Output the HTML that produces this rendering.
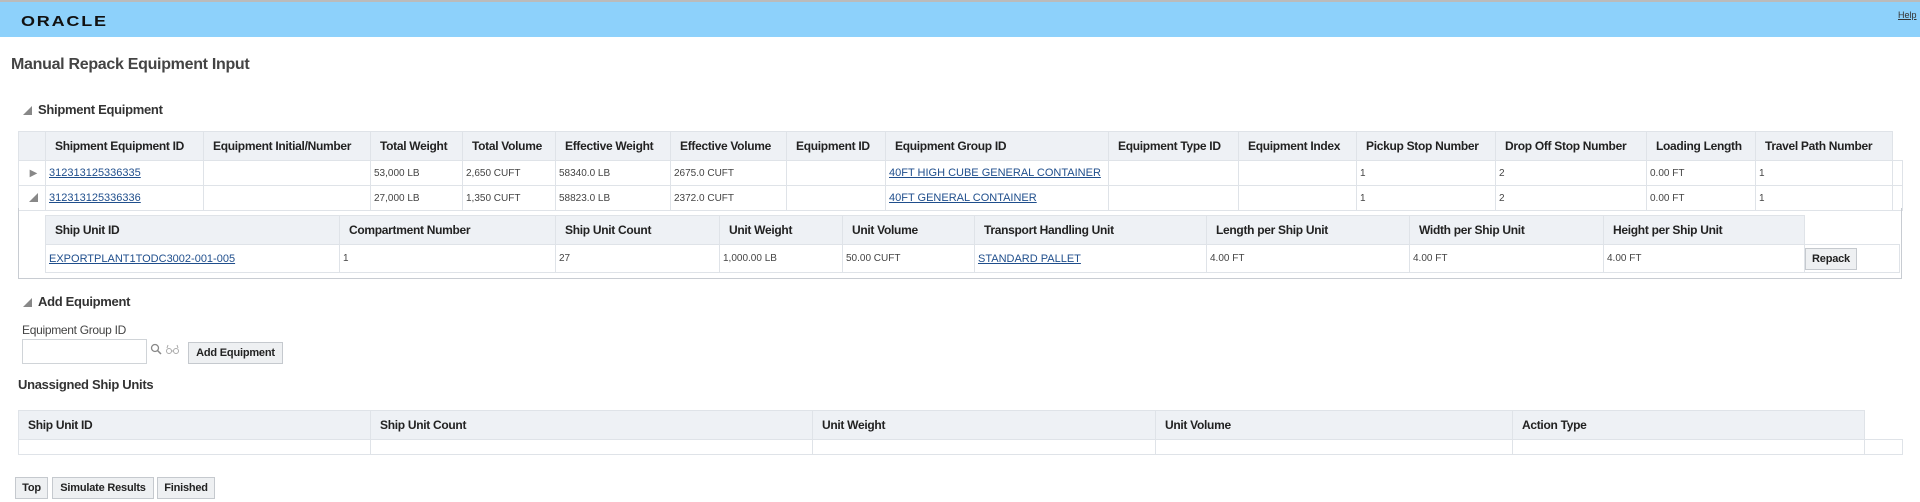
<!DOCTYPE html>
<html><head><meta charset="utf-8"><style>
*{box-sizing:border-box;margin:0;padding:0}
body{width:1920px;height:502px;overflow:hidden;background:#fff;font-family:"Liberation Sans",Arial,sans-serif;color:#333;position:relative}
.hdr{position:absolute;left:0;top:0;width:1920px;height:37px;background:#8dd1fb;border-top:2px solid #bbb}
.logo{position:absolute;left:21px;top:11px;font:bold 15px "Liberation Sans",sans-serif;letter-spacing:1.5px;color:#111;transform:scaleX(1.2);transform-origin:left}
.help{position:absolute;left:1898px;top:8px;font-size:9px;color:#333;text-decoration:underline}
.abs{position:absolute}
.title{left:11px;top:56px;font-size:16px;font-weight:bold;color:#444;letter-spacing:-0.3px}
.sec{font-size:13px;font-weight:bold;color:#333;letter-spacing:-0.3px}
.tri{display:inline-block;width:0;height:0;border-left:9px solid transparent;border-bottom:9px solid #888;margin-right:6px;vertical-align:-1px}
table{border-collapse:collapse;table-layout:fixed;position:absolute}
th{background:#eef1f5;font-size:12px;font-weight:bold;text-align:left;padding:0 0 0 9px;height:29px;border:1px solid #dfe3e8;letter-spacing:-0.3px;white-space:nowrap;overflow:hidden;color:#222}
td{font-size:10px;color:#444;padding:0 0 0 3px;border:1px solid #dfe3e8;white-space:nowrap;overflow:hidden;height:25px}
tr.thin td{height:15px;line-height:10px;font-size:8px}
a{color:#1f4e8c;text-decoration:underline;font-size:11px}
.btn{position:absolute;background:#eef0f2;border:1px solid #c5c9ce;font-size:11px;font-weight:bold;color:#222;text-align:center;line-height:20px;height:22px;letter-spacing:-0.2px}
</style></head><body>
<div class="hdr"><div class="logo">ORACLE</div><div class="help">Help</div></div>
<div class="abs title">Manual Repack Equipment Input</div>
<div class="abs sec" style="left:23px;top:102px"><span class="tri"></span>Shipment Equipment</div>

<table style="left:18px;top:131px;width:1884px">
<colgroup><col style="width:27px"><col style="width:158px"><col style="width:167px"><col style="width:92px"><col style="width:93px"><col style="width:115px"><col style="width:116px"><col style="width:99px"><col style="width:223px"><col style="width:130px"><col style="width:118px"><col style="width:139px"><col style="width:151px"><col style="width:109px"><col style="width:137px"><col style="width:10px"></colgroup>
<tr><th></th><th>Shipment Equipment ID</th><th>Equipment Initial/Number</th><th>Total Weight</th><th>Total Volume</th><th>Effective Weight</th><th>Effective Volume</th><th>Equipment ID</th><th>Equipment Group ID</th><th>Equipment Type ID</th><th>Equipment Index</th><th>Pickup Stop Number</th><th>Drop Off Stop Number</th><th>Loading Length</th><th>Travel Path Number</th><th style="background:#fff;border-top:none;border-right:none"></th></tr>
<tr><td style="text-align:center;color:#888;font-size:10px">&#9654;</td><td><a>312313125336335</a></td><td></td><td>53,000 LB</td><td>2,650 CUFT</td><td>58340.0 LB</td><td>2675.0 CUFT</td><td></td><td><a>40FT HIGH CUBE GENERAL CONTAINER</a></td><td></td><td></td><td>1</td><td>2</td><td>0.00 FT</td><td>1</td><td></td></tr>
<tr><td style="text-align:center;color:#888;font-size:10px"><span class="tri" style="margin:0"></span></td><td><a>312313125336336</a></td><td></td><td>27,000 LB</td><td>1,350 CUFT</td><td>58823.0 LB</td><td>2372.0 CUFT</td><td></td><td><a>40FT GENERAL CONTAINER</a></td><td></td><td></td><td>1</td><td>2</td><td>0.00 FT</td><td>1</td><td></td></tr>
</table>
<div class="abs" style="left:18px;top:208px;width:1884px;height:71px;border:1px solid #c8ccd2;border-top:none"></div>
<table style="left:45px;top:215px;width:1854px">
<colgroup><col style="width:294px"><col style="width:216px"><col style="width:164px"><col style="width:123px"><col style="width:132px"><col style="width:232px"><col style="width:203px"><col style="width:194px"><col style="width:201px"><col style="width:95px"></colgroup>
<tr><th>Ship Unit ID</th><th>Compartment Number</th><th>Ship Unit Count</th><th>Unit Weight</th><th>Unit Volume</th><th>Transport Handling Unit</th><th>Length per Ship Unit</th><th>Width per Ship Unit</th><th>Height per Ship Unit</th><th style="background:#fff;border-top:none;border-right:none"></th></tr>
<tr><td style="height:28px"><a>EXPORTPLANT1TODC3002-001-005</a></td><td>1</td><td>27</td><td>1,000.00 LB</td><td>50.00 CUFT</td><td><a>STANDARD PALLET</a></td><td>4.00 FT</td><td>4.00 FT</td><td>4.00 FT</td><td></td></tr>
</table>
<div class="btn" style="left:1805px;top:248px;width:52px">Repack</div>

<div class="abs sec" style="left:23px;top:294px"><span class="tri"></span>Add Equipment</div>
<div class="abs" style="left:22px;top:323px;font-size:12px;color:#444;letter-spacing:-0.3px">Equipment Group ID</div>
<div class="abs" style="left:22px;top:339px;width:125px;height:25px;border:1px solid #d0d4d8"></div>
<svg class="abs" style="left:150px;top:343px" width="32" height="14" viewBox="0 0 32 14"><circle cx="5" cy="5" r="3.5" fill="none" stroke="#888" stroke-width="1.3"/><path d="M7.5 7.5 L11 11" stroke="#888" stroke-width="1.5"/><circle cx="19" cy="8" r="2.5" fill="none" stroke="#aaa"/><circle cx="26" cy="8" r="2.5" fill="none" stroke="#aaa"/><path d="M17 5 L18 2 M28 5 L27 2 M21.5 8 L23.5 8" stroke="#aaa"/></svg>
<div class="btn" style="left:188px;top:342px;width:95px">Add Equipment</div>
<div class="abs sec" style="left:18px;top:377px">Unassigned Ship Units</div>

<table style="left:18px;top:410px;width:1884px">
<colgroup><col style="width:352px"><col style="width:442px"><col style="width:343px"><col style="width:357px"><col style="width:352px"><col style="width:38px"></colgroup>
<tr><th>Ship Unit ID</th><th>Ship Unit Count</th><th>Unit Weight</th><th>Unit Volume</th><th>Action Type</th><th style="background:#fff;border-top:none;border-right:none"></th></tr>
<tr class="thin"><td></td><td></td><td></td><td></td><td></td><td></td></tr>
</table>

<div class="btn" style="left:15px;top:477px;width:33px">Top</div>
<div class="btn" style="left:52px;top:477px;width:102px">Simulate Results</div>
<div class="btn" style="left:157px;top:477px;width:58px">Finished</div>
</body></html>
